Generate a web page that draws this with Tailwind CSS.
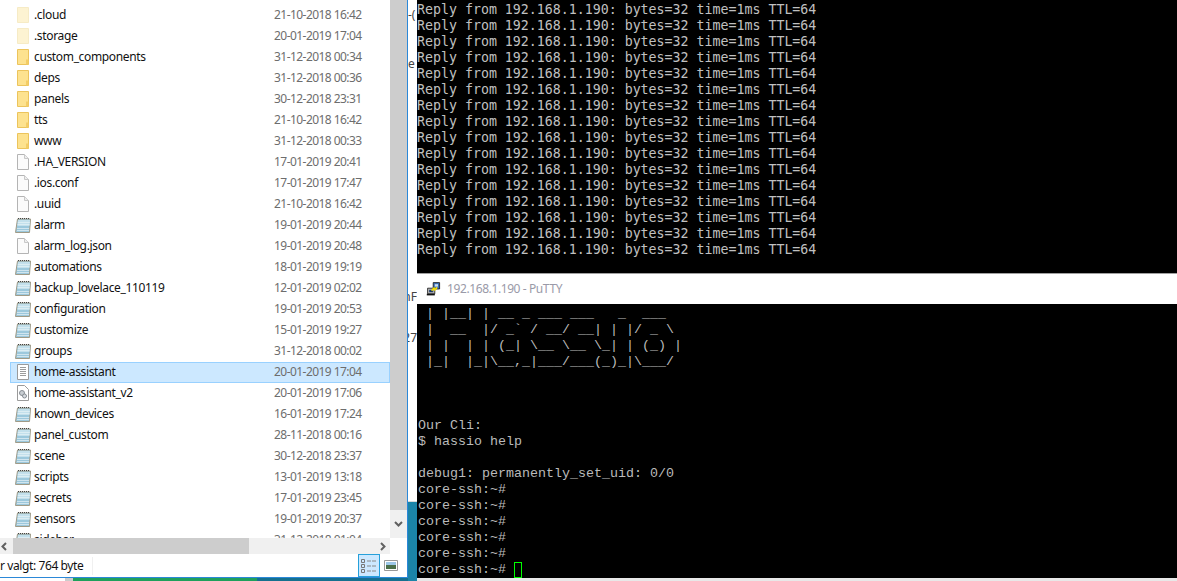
<!DOCTYPE html>
<html lang="da">
<head>
    <meta charset="UTF-8">
    <title>Explorer og PuTTY</title>
    <script src="https://cdn.jsdelivr.net/npm/@tailwindcss/browser@4"></script>
</head>
<body class="bg-white overflow-hidden">
    <svg class="hidden">
        <symbol id="folder" viewBox="0 0 16 16"><path d="M2.500.5h11v15h-11z" fill="#fde28f" stroke="#ecc45c"/><path d="M11 10.500h2.500v5H11z" fill="#f3cd66"/></symbol>
        <symbol id="folder-h" viewBox="0 0 16 16"><path d="M2.500.5h11v15h-11z" fill="#fdf3d2" stroke="#f6ebc6"/></symbol>
        <symbol id="blank" viewBox="0 0 16 16"><path d="M2.500.5h7l4 4v11h-11z" fill="#fbfbfb" stroke="#b4b4b4"/><path d="M9.500.5v4h4" fill="#eee" stroke="#c8c8c8"/></symbol>
        <symbol id="notepad" viewBox="0 0 16 16"><path d="M2.500 2h13l-1 13.500H.5z" fill="#9cc8dc" stroke="#a09a86"/><path d="M3 3h12l-.5 6H2.500z" fill="#c3e0ec"/><path d="M2 11.500h12M2 13.500h12M2.500 7.500h12M2.800 5.500h12" stroke="#e6f2f7" stroke-width=".7"/><path d="M3 1.500h12" stroke="#444" stroke-dasharray="1 1"/></symbol>
        <symbol id="text" viewBox="0 0 16 16"><path d="M2.500.5h11v15h-11z" fill="#fff" stroke="#9a9a9a"/><path d="M5 3.500h6M5 5.500h6M5 7.500h6M5 9.500h6M5 11.500h6" stroke="#9c9c9c"/></symbol>
        <symbol id="config" viewBox="0 0 16 16"><path d="M2.500.5h7l4 4v11h-11z" fill="#fff" stroke="#9a9a9a"/><circle cx="7" cy="8" r="2.500" fill="#c8cdd2" stroke="#868c92"/><circle cx="9.500" cy="11" r="2" fill="#d8dce0" stroke="#868c92"/></symbol>
    </svg>

    <div class="relative w-[1177px] h-[581px] overflow-hidden flex">
        <!-- Stifinder -->
        <div class="w-[408px] h-full flex flex-col shrink-0">
            <div class="h-[578px] flex flex-col border-r border-b border-[#2b88d8] bg-white font-['Noto_Sans',sans-serif] text-[12px] tracking-[-0.35px] text-[#111]">
                <div class="flex h-[538px] overflow-hidden">
                    <div class="w-[390px] pt-[4.500px] pl-[10px] overflow-hidden shrink-0">
                        <div class="flex items-center h-[21px]"><svg class="w-[16px] h-[16px] ml-[5px] mr-[3px]"><use href="#folder-h"/></svg><span class="w-[240px]">.cloud</span><span class="text-[#6d6d6d] tracking-[-0.55px]">21-10-2018 16:42</span></div>
                        <div class="flex items-center h-[21px]"><svg class="w-[16px] h-[16px] ml-[5px] mr-[3px]"><use href="#folder-h"/></svg><span class="w-[240px]">.storage</span><span class="text-[#6d6d6d] tracking-[-0.55px]">20-01-2019 17:04</span></div>
                        <div class="flex items-center h-[21px]"><svg class="w-[16px] h-[16px] ml-[5px] mr-[3px]"><use href="#folder"/></svg><span class="w-[240px]">custom_components</span><span class="text-[#6d6d6d] tracking-[-0.55px]">31-12-2018 00:34</span></div>
                        <div class="flex items-center h-[21px]"><svg class="w-[16px] h-[16px] ml-[5px] mr-[3px]"><use href="#folder"/></svg><span class="w-[240px]">deps</span><span class="text-[#6d6d6d] tracking-[-0.55px]">31-12-2018 00:36</span></div>
                        <div class="flex items-center h-[21px]"><svg class="w-[16px] h-[16px] ml-[5px] mr-[3px]"><use href="#folder"/></svg><span class="w-[240px]">panels</span><span class="text-[#6d6d6d] tracking-[-0.55px]">30-12-2018 23:31</span></div>
                        <div class="flex items-center h-[21px]"><svg class="w-[16px] h-[16px] ml-[5px] mr-[3px]"><use href="#folder"/></svg><span class="w-[240px]">tts</span><span class="text-[#6d6d6d] tracking-[-0.55px]">21-10-2018 16:42</span></div>
                        <div class="flex items-center h-[21px]"><svg class="w-[16px] h-[16px] ml-[5px] mr-[3px]"><use href="#folder"/></svg><span class="w-[240px]">www</span><span class="text-[#6d6d6d] tracking-[-0.55px]">31-12-2018 00:33</span></div>
                        <div class="flex items-center h-[21px]"><svg class="w-[16px] h-[16px] ml-[5px] mr-[3px]"><use href="#blank"/></svg><span class="w-[240px]">.HA_VERSION</span><span class="text-[#6d6d6d] tracking-[-0.55px]">17-01-2019 20:41</span></div>
                        <div class="flex items-center h-[21px]"><svg class="w-[16px] h-[16px] ml-[5px] mr-[3px]"><use href="#blank"/></svg><span class="w-[240px]">.ios.conf</span><span class="text-[#6d6d6d] tracking-[-0.55px]">17-01-2019 17:47</span></div>
                        <div class="flex items-center h-[21px]"><svg class="w-[16px] h-[16px] ml-[5px] mr-[3px]"><use href="#blank"/></svg><span class="w-[240px]">.uuid</span><span class="text-[#6d6d6d] tracking-[-0.55px]">21-10-2018 16:42</span></div>
                        <div class="flex items-center h-[21px]"><svg class="w-[16px] h-[16px] ml-[5px] mr-[3px]"><use href="#notepad"/></svg><span class="w-[240px]">alarm</span><span class="text-[#6d6d6d] tracking-[-0.55px]">19-01-2019 20:44</span></div>
                        <div class="flex items-center h-[21px]"><svg class="w-[16px] h-[16px] ml-[5px] mr-[3px]"><use href="#blank"/></svg><span class="w-[240px]">alarm_log.json</span><span class="text-[#6d6d6d] tracking-[-0.55px]">19-01-2019 20:48</span></div>
                        <div class="flex items-center h-[21px]"><svg class="w-[16px] h-[16px] ml-[5px] mr-[3px]"><use href="#notepad"/></svg><span class="w-[240px]">automations</span><span class="text-[#6d6d6d] tracking-[-0.55px]">18-01-2019 19:19</span></div>
                        <div class="flex items-center h-[21px]"><svg class="w-[16px] h-[16px] ml-[5px] mr-[3px]"><use href="#notepad"/></svg><span class="w-[240px]">backup_lovelace_110119</span><span class="text-[#6d6d6d] tracking-[-0.55px]">12-01-2019 02:02</span></div>
                        <div class="flex items-center h-[21px]"><svg class="w-[16px] h-[16px] ml-[5px] mr-[3px]"><use href="#notepad"/></svg><span class="w-[240px]">configuration</span><span class="text-[#6d6d6d] tracking-[-0.55px]">19-01-2019 20:53</span></div>
                        <div class="flex items-center h-[21px]"><svg class="w-[16px] h-[16px] ml-[5px] mr-[3px]"><use href="#notepad"/></svg><span class="w-[240px]">customize</span><span class="text-[#6d6d6d] tracking-[-0.55px]">15-01-2019 19:27</span></div>
                        <div class="flex items-center h-[21px]"><svg class="w-[16px] h-[16px] ml-[5px] mr-[3px]"><use href="#notepad"/></svg><span class="w-[240px]">groups</span><span class="text-[#6d6d6d] tracking-[-0.55px]">31-12-2018 00:02</span></div>
                        <div class="flex items-center h-[21px] bg-[#cce8ff] border border-[#99d1ff]"><svg class="w-[16px] h-[16px] ml-[4px] mr-[3px]"><use href="#text"/></svg><span class="w-[240px]">home-assistant</span><span class="text-[#6d6d6d] tracking-[-0.55px]">20-01-2019 17:04</span></div>
                        <div class="flex items-center h-[21px]"><svg class="w-[16px] h-[16px] ml-[5px] mr-[3px]"><use href="#config"/></svg><span class="w-[240px]">home-assistant_v2</span><span class="text-[#6d6d6d] tracking-[-0.55px]">20-01-2019 17:06</span></div>
                        <div class="flex items-center h-[21px]"><svg class="w-[16px] h-[16px] ml-[5px] mr-[3px]"><use href="#notepad"/></svg><span class="w-[240px]">known_devices</span><span class="text-[#6d6d6d] tracking-[-0.55px]">16-01-2019 17:24</span></div>
                        <div class="flex items-center h-[21px]"><svg class="w-[16px] h-[16px] ml-[5px] mr-[3px]"><use href="#notepad"/></svg><span class="w-[240px]">panel_custom</span><span class="text-[#6d6d6d] tracking-[-0.55px]">28-11-2018 00:16</span></div>
                        <div class="flex items-center h-[21px]"><svg class="w-[16px] h-[16px] ml-[5px] mr-[3px]"><use href="#notepad"/></svg><span class="w-[240px]">scene</span><span class="text-[#6d6d6d] tracking-[-0.55px]">30-12-2018 23:37</span></div>
                        <div class="flex items-center h-[21px]"><svg class="w-[16px] h-[16px] ml-[5px] mr-[3px]"><use href="#notepad"/></svg><span class="w-[240px]">scripts</span><span class="text-[#6d6d6d] tracking-[-0.55px]">13-01-2019 13:18</span></div>
                        <div class="flex items-center h-[21px]"><svg class="w-[16px] h-[16px] ml-[5px] mr-[3px]"><use href="#notepad"/></svg><span class="w-[240px]">secrets</span><span class="text-[#6d6d6d] tracking-[-0.55px]">17-01-2019 23:45</span></div>
                        <div class="flex items-center h-[21px]"><svg class="w-[16px] h-[16px] ml-[5px] mr-[3px]"><use href="#notepad"/></svg><span class="w-[240px]">sensors</span><span class="text-[#6d6d6d] tracking-[-0.55px]">19-01-2019 20:37</span></div>
                        <div class="flex items-center h-[21px]"><svg class="w-[16px] h-[16px] ml-[5px] mr-[3px]"><use href="#notepad"/></svg><span class="w-[240px]">sidebar</span><span class="text-[#6d6d6d] tracking-[-0.55px]">31-12-2018 01:04</span></div>
                    </div>
                    <div class="flex-1 flex flex-col">
                        <div class="h-[510px] bg-[#cdcdcd]"></div>
                        <div class="h-[28px] bg-[#f0f0f0] flex items-center justify-center">
                            <svg class="w-[9px] h-[6px]" viewBox="0 0 9 6"><path d="M1 1l3.500 3.500L8 1" fill="none" stroke="#606060" stroke-width="2"/></svg>
                        </div>
                    </div>
                </div>
                <div class="h-[16px] flex items-center bg-[#f0f0f0] w-[390px]">
                    <svg class="w-[13px] h-[9px]" viewBox="0 0 13 9"><path d="M6 1L2.500 4.500 6 8" fill="none" stroke="#606060" stroke-width="2"/></svg>
                    <div class="w-[236px] h-full bg-[#cdcdcd]"></div>
                    <div class="flex-1"></div>
                    <svg class="w-[13px] h-[9px]" viewBox="0 0 13 9"><path d="M4 1l3.500 3.500L4 8" fill="none" stroke="#606060" stroke-width="2"/></svg>
                </div>
                <div class="flex-1 flex items-center justify-between bg-white pr-[9px]">
                    <span class="whitespace-nowrap w-[93px] border-r border-[#f0f0f0] tracking-[-0.4px]">r valgt: 764 byte</span>
                    <div class="flex items-center gap-[4px]">
                        <div class="w-[22px] h-[23px] bg-[#cce8ff] border border-[#26a0da] flex items-center justify-center">
                            <svg class="w-[16px] h-[14px]" viewBox="0 0 16 14"><path d="M.5.5h3v3h-3zM.5 5.500h3v3h-3zM.5 10.500h3v3h-3z" fill="none" stroke="#777"/><path d="M6 2h4M11 2h4M6 7h4M11 7h4M6 12h4M11 12h4" stroke="#888"/></svg>
                        </div>
                        <svg class="w-[14px] h-[11px]" viewBox="0 0 14 11"><path d="M.5.5h13v10H.5z" fill="#fff" stroke="#999"/><path d="M2 2h10v3H2z" fill="#9cc7e8"/><path d="M2 5h10v4H2z" fill="#4b6f4a"/></svg>
                    </div>
                </div>
            </div>
            <div class="flex-1 bg-[linear-gradient(90deg,#fff_0,#fff_16%,#ccc_16%,#ccc_18%,#1fa05c_18%,#1fa05c_63%,#16708f_63%)]"></div>
        </div>

        <!-- Stump af vindue bagved -->
        <div class="w-[9px] h-full shrink-0 flex flex-col bg-white font-['Noto_Sans',sans-serif] text-[12px] text-[#444] overflow-hidden">
            <div class="h-[502px] relative border-b border-[#d8d8d8]">
                <span class="absolute left-0 top-[6px]">-(</span>
                <span class="absolute left-0 top-[55px]">e</span>
                <span class="absolute right-0 top-[288px]">nF</span>
                <span class="absolute right-0 top-[329px]">27</span>
            </div>
            <div class="flex-1 bg-[#1b84a8]"></div>
        </div>

        <div class="flex-1 flex flex-col min-w-0">
            <!-- ping vindue -->
            <pre class="h-[273px] bg-black text-[#c0c0c0] font-['DejaVu_Sans_Mono',monospace] text-[13.280px] leading-[16px] pt-[2px] overflow-hidden">Reply from 192.168.1.190: bytes=32 time=1ms TTL=64
Reply from 192.168.1.190: bytes=32 time=1ms TTL=64
Reply from 192.168.1.190: bytes=32 time=1ms TTL=64
Reply from 192.168.1.190: bytes=32 time=1ms TTL=64
Reply from 192.168.1.190: bytes=32 time=1ms TTL=64
Reply from 192.168.1.190: bytes=32 time=1ms TTL=64
Reply from 192.168.1.190: bytes=32 time=1ms TTL=64
Reply from 192.168.1.190: bytes=32 time=1ms TTL=64
Reply from 192.168.1.190: bytes=32 time=1ms TTL=64
Reply from 192.168.1.190: bytes=32 time=1ms TTL=64
Reply from 192.168.1.190: bytes=32 time=1ms TTL=64
Reply from 192.168.1.190: bytes=32 time=1ms TTL=64
Reply from 192.168.1.190: bytes=32 time=1ms TTL=64
Reply from 192.168.1.190: bytes=32 time=1ms TTL=64
Reply from 192.168.1.190: bytes=32 time=1ms TTL=64
Reply from 192.168.1.190: bytes=32 time=1ms TTL=64</pre>
            <!-- PuTTY titel -->
            <div class="h-[31px] bg-white border-t border-[#a0a0a0] flex items-center pl-[9px] gap-[5px] font-['Noto_Sans',sans-serif] text-[12px] tracking-[-0.4px] text-[#9a9aa8]">
                <svg class="w-[16px] h-[16px]" viewBox="0 0 20 18"><path d="M9 1h8v8H9z" fill="#3b6fb5" stroke="#111"/><path d="M11 3h4v3h-4z" fill="#c8dcf2"/><path d="M2 8h9v7H2z" fill="#b8b8b8" stroke="#111"/><path d="M4 10h5v3H4z" fill="#1c3a6b"/><path d="M1 16h10" stroke="#111" stroke-width="2"/><path d="M7 11l3-3 1 2 3-3" fill="none" stroke="#f5e000" stroke-width="2"/></svg>
                <span>192.168.1.190 - PuTTY</span>
            </div>
            <!-- PuTTY terminal -->
            <div class="h-[274px] bg-black overflow-hidden">
                <pre class="mt-[2px] pl-px text-[#bbbbbb] font-['Liberation_Mono',monospace] text-[13.333px] leading-[16px]"> | |__| | __ _ ___ ___   _  ___
 |  __  |/ _` / __/ __| | |/ _ \
 | |  | | (_| \__ \__ \_| | (_) |
 |_|  |_|\__,_|___/___(_)_|\___/



Our Cli:
$ hassio help

debug1: permanently_set_uid: 0/0
core-ssh:~#
core-ssh:~#
core-ssh:~#
core-ssh:~#
core-ssh:~#
core-ssh:~# <span class="inline-block align-top w-[8px] h-[16px] border border-[#00ff00]"></span></pre>
            </div>
            <div class="flex-1 bg-[#e8e8e8]"></div>
        </div>
    </div>
</body>
</html>
